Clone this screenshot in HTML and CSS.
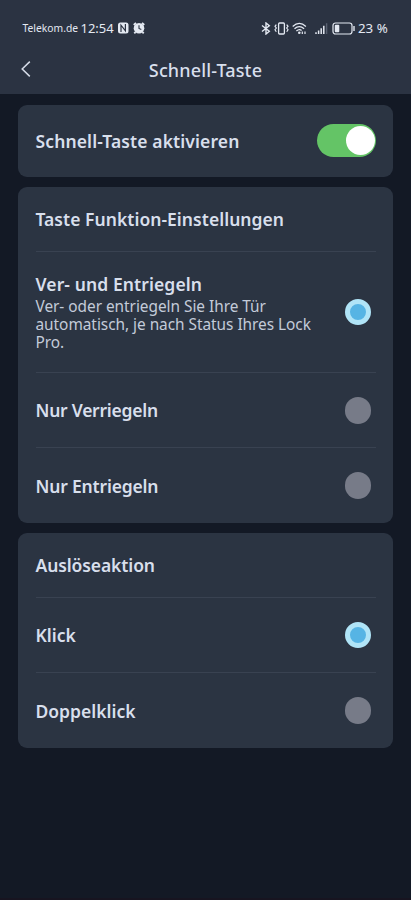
FILE: index.html
```html
<!DOCTYPE html>
<html lang="de">
<head>
<meta charset="utf-8">
<meta name="viewport" content="width=device-width, initial-scale=1">
<title>Schnell-Taste</title>
<link rel="stylesheet" href="styles.css">
</head>
<body>
<header class="top">
  <div class="status">
    <div class="status-left">
      <span class="carrier">Telekom.de</span>
      <span class="clock">12:54</span>
      <svg class="nfc" width="11" height="12" viewBox="0 0 11 12"><rect x="0" y="0.5" width="10.5" height="11" rx="2.5" fill="#e4e9f2"/><path d="M3 10V3.2L7.4 8.8V2" fill="none" stroke="#2b3342" stroke-width="1.2"/></svg>
      <svg class="alarm" width="12" height="12" viewBox="0 0 12 12"><path d="M0.8 3L3 .8M9 .8L11.2 3M2.5 10L1.3 11.4M9.5 10L10.7 11.4" stroke="#e4e9f2" stroke-width="1.9"/><circle cx="6" cy="6.2" r="5.3" fill="#e4e9f2"/><path d="M6 3.2V6.5L8.3 7.6" fill="none" stroke="#2b3342" stroke-width="1.1"/></svg>
    </div>
    <div class="status-right">
      <svg width="10" height="13" viewBox="0 0 10 13"><path d="M1 3.5L8.3 9.3L5 12V1L8.3 3.7L1 9.5" fill="none" stroke="#e4e9f2" stroke-width="1.4"/></svg>
      <svg class="vibrate" width="15" height="13" viewBox="0 0 15 13"><rect x="4.6" y="1" width="5.8" height="11" rx="1" fill="none" stroke="#e4e9f2" stroke-width="1.3"/><path d="M2.3 2.6L1 4.3L2.3 6L1 7.7L2.3 9.8M12.7 2.6L14 4.3L12.7 6L14 7.7L12.7 9.8" fill="none" stroke="#e4e9f2" stroke-width="1.2"/></svg>
      <svg class="wifi" width="15" height="13" viewBox="0 0 15 13"><g fill="none" stroke="#e4e9f2" stroke-width="1.3"><path d="M.7 4.4Q7.3-1.6 13.9 4.4M2.5 6.7Q7.3 2.5 12.1 6.7M4.4 9Q7.3 6.5 9.6 8.6"/><path d="M10.3 9.5V12M13 9.5V12" stroke-width="1.2"/></g><circle cx="7.3" cy="10.8" r="1.3" fill="#e4e9f2"/></svg>
      <svg class="signal" width="13" height="13" viewBox="0 0 13 13"><path d="M1 10.2V12M3.6 8.5V12M6.2 6.2V12M8.8 3.7V12" stroke="#e4e9f2" stroke-width="1.5"/><path d="M11.6 1.2V12" stroke="#596171" stroke-width="1.4"/></svg>
      <svg class="battery" width="24" height="13" viewBox="0 0 24 13"><rect x="1" y="1" width="19" height="11" rx="2.5" fill="none" stroke="#e4e9f2" stroke-width="1.2"/><rect x="2.8" y="2.8" width="4.5" height="7.4" rx="1" fill="#e4e9f2"/><path d="M22 4V9" stroke="#e4e9f2" stroke-width="1.4"/></svg>
      <span class="percent">23 %</span>
    </div>
  </div>
  <div class="nav">
    <svg class="back" width="12" height="18" viewBox="0 0 12 18"><path d="M9.8 1.6L2.2 9L9.8 16.4" fill="none" stroke="#d5dbe7" stroke-width="1.5"/></svg>
    <h1>Schnell-Taste</h1>
  </div>
</header>
<main>
  <section class="card">
    <div class="row enable"><span class="label l-enable">Schnell-Taste aktivieren</span><span class="switch"></span></div>
  </section>
  <section class="card">
    <h2 class="row head"><span class="label l-functions">Taste Funktion-Einstellungen</span></h2>
    <div class="row detail">
      <div class="copy"><span class="label l-both">Ver- und Entriegeln</span>
        <p>Ver- oder entriegeln Sie Ihre Tür<br>automatisch, je nach Status Ihres Lock<br>Pro.</p></div>
      <span class="radio on"></span>
    </div>
    <div class="row"><span class="label l-lock">Nur Verriegeln</span><span class="radio"></span></div>
    <div class="row"><span class="label l-unlock">Nur Entriegeln</span><span class="radio"></span></div>
  </section>
  <section class="card">
    <h2 class="row head"><span class="label l-action">Auslöseaktion</span></h2>
    <div class="row"><span class="label">Klick</span><span class="radio on"></span></div>
    <div class="row"><span class="label">Doppelklick</span><span class="radio"></span></div>
  </section>
</main>
</body>
</html>
```
FILE: styles.css
```css
* { box-sizing: border-box; }
body { margin: 0; height: 900px; background: #131925; color: #d8dfec; font-family: "Noto Sans", sans-serif; overflow: hidden; border-bottom: 2px solid #171420; }
svg { display: block; flex: none; }
.top { height: 94px; background: #2b3342; }
.status { height: 46px; padding: 10px 23px 0 22.5px; display: flex; justify-content: space-between; align-items: center; color: #e4e9f2; white-space: nowrap; }
.status-left, .status-right { display: flex; align-items: center; }
.carrier { width: 58px; font-size: 10.3px; }
.clock { width: 37px; font-size: 13px; }
.alarm { margin-left: 4px; }
.vibrate { margin-left: 3px; }
.wifi { margin-left: 3px; }
.signal { margin-left: 8px; }
.battery { margin-left: 4px; }
.percent { width: 30px; margin-left: 2px; font-size: 13.3px; }
.nav { height: 46px; padding: 0 20px; display: grid; grid-template-columns: 12px 1fr 12px; align-items: center; }
h1 { margin: 0; padding-top: 2px; text-align: center; font-size: 18px; line-height: 24px; font-weight: 500; letter-spacing: 0.15px; }
main { padding: 10.5px 18px 0 17.5px; display: flex; flex-direction: column; gap: 10.5px; }
.card { padding: 0 17.5px 0 18px; border-radius: 9px; background: #2b3442; }
.row { margin: 0; height: 75.4px; padding-right: 4.5px; display: flex; align-items: center; justify-content: space-between; }
.row + .row { border-top: 1px solid #394251; }
.row.enable { height: 72px; padding-right: 0; }
.row.head { height: 63.6px; }
.row.detail { height: 121.5px; }
.label { font-size: 17.5px; line-height: 24px; font-weight: 600; white-space: nowrap; }
.l-enable { letter-spacing: 0.12px; }
.l-functions { letter-spacing: 0.04px; }
.l-both { letter-spacing: 0.1px; }
.l-lock { letter-spacing: -0.25px; }
.l-unlock { letter-spacing: -0.18px; }
.l-action { letter-spacing: -0.1px; }
.copy { padding-top: 2px; display: flex; flex-direction: column; align-items: flex-start; }
.copy .label { line-height: 22px; margin-bottom: 3px; }
p { margin: 0; font-size: 15.4px; line-height: 18px; letter-spacing: -0.03px; color: #c3cbd9; white-space: nowrap; }
.switch { width: 59px; height: 33px; padding: 2px 1px 0 0; border-radius: 17px; background: #64c466; display: flex; justify-content: flex-end; }
.switch::before { content: ""; width: 29px; height: 29px; border-radius: 50%; background: #fff; }
.radio { width: 26.5px; height: 26.5px; border-radius: 50%; background: #777b88; flex: none; }
.radio.on { background: #56b4e4; border: 5.5px solid #b0e4f7; }
```
